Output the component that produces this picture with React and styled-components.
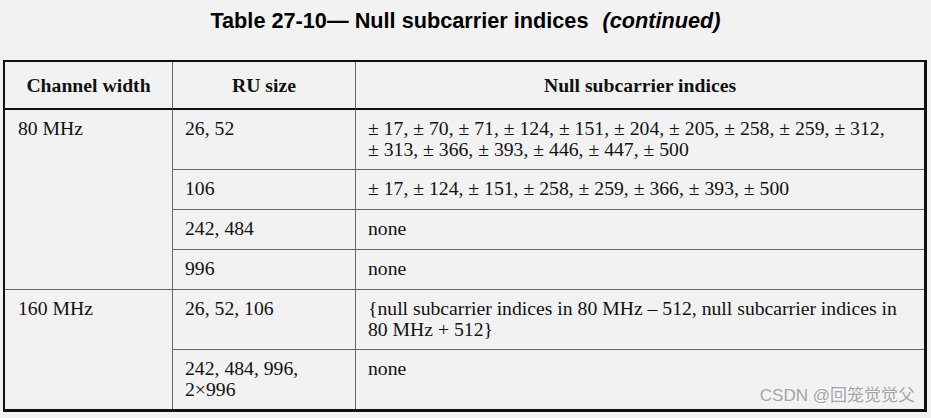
import React from 'react';
import styled, { createGlobalStyle } from 'styled-components';

const GlobalStyle = createGlobalStyle`
  html, body {
    margin: 0;
    padding: 0;
    background: #f2f2f2;
  }
`;

const Page = styled.div`
  position: relative;
  width: 931px;
  height: 418px;
  background: #f2f2f2;
  overflow: hidden;
`;

const Caption = styled.h1`
  margin: 0;
  height: 60px;
  padding-top: 8px;
  box-sizing: border-box;
  text-align: center;
  font-family: "Liberation Sans", Arial, sans-serif;
  font-weight: bold;
  font-size: 21.7px;
  line-height: 25px;
  color: #000;
`;

const Cont = styled.i`
  margin-left: 8px;
`;

const Table = styled.table`
  margin-left: 3px;
  width: 924px;
  border-collapse: separate;
  border-spacing: 0;
  border-style: solid;
  border-color: #111;
  border-width: 2px 3px 3px 2px;
  table-layout: fixed;
  font-family: "Liberation Serif", "Times New Roman", serif;
  font-size: 19.7px;
  color: #111;
`;

const Th = styled.th`
  height: 46px;
  padding: 0 12px;
  text-align: center;
  font-weight: bold;
  border-bottom: 2px solid #111;
  border-right: ${(p) => (p.$last ? 'none' : '1px solid #666')};
`;

const Td = styled.td`
  vertical-align: top;
  text-align: left;
  padding: 8px 12px ${(p) => (p.$tall ? '9px' : '10px')} ${(p) => (p.$first ? '13px' : '12px')};
  line-height: 21px;
  border-right: ${(p) => (p.$last ? 'none' : '1px solid #666')};
  border-bottom: ${(p) => (p.$end ? 'none' : '1px solid #666')};
`;

const Watermark = styled.div`
  position: absolute;
  right: 16px;
  bottom: 12px;
  font-family: "Liberation Sans", "Noto Sans CJK SC", sans-serif;
  font-size: 17px;
  color: #a3a3a3;
  text-shadow: 0 0 2px #fff;
`;

const rows = [
  { width: '80 MHz', span: 4, tall: true, ru: '26, 52', idx: <>± 17, ± 70, ± 71, ± 124, ± 151, ± 204, ± 205, ± 258, ± 259, ± 312,<br />± 313, ± 366, ± 393, ± 446, ± 447, ± 500</> },
  { ru: '106', idx: '± 17, ± 124, ± 151, ± 258, ± 259, ± 366, ± 393, ± 500' },
  { ru: '242, 484', idx: 'none' },
  { ru: '996', idx: 'none' },
  { width: '160 MHz', span: 2, tall: true, ru: '26, 52, 106', idx: <>{'{'}null subcarrier indices in 80 MHz – 512, null subcarrier indices in<br />80 MHz + 512{'}'}</> },
  { tall: true, ru: <>242, 484, 996,<br />2×996</>, idx: 'none' },
];

export default function App() {
  return (
    <Page>
      <GlobalStyle />
      <Caption>
        Table 27-10— Null subcarrier indices <Cont>(continued)</Cont>
      </Caption>
      <Table>
        <colgroup>
          <col style={{ width: 168 }} />
          <col style={{ width: 183 }} />
          <col />
        </colgroup>
        <thead>
          <tr>
            <Th>Channel width</Th>
            <Th>RU size</Th>
            <Th $last>Null subcarrier indices</Th>
          </tr>
        </thead>
        <tbody>
          {rows.map((r, i) => {
            const end = i === rows.length - 1;
            return (
              <tr key={i}>
                {r.width && (
                  <Td rowSpan={r.span} $tall $first $end={i + r.span === rows.length}>
                    {r.width}
                  </Td>
                )}
                <Td $tall={r.tall} $end={end}>{r.ru}</Td>
                <Td $tall={r.tall} $end={end} $last>{r.idx}</Td>
              </tr>
            );
          })}
        </tbody>
      </Table>
      <Watermark>CSDN @回笼觉觉父</Watermark>
    </Page>
  );
}
